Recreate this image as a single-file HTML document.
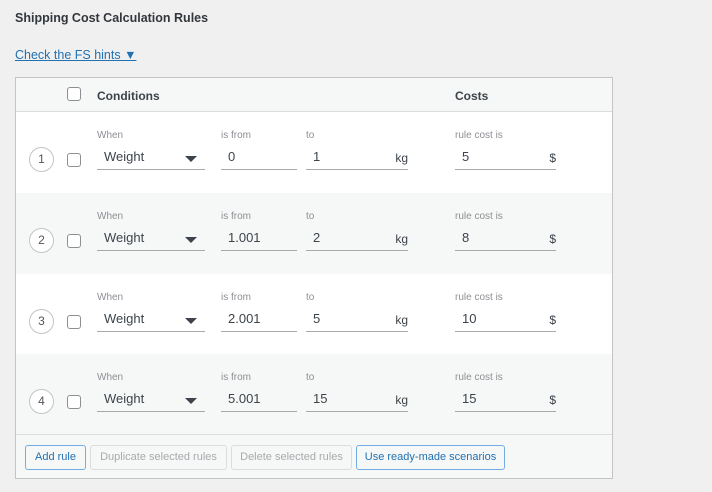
<!DOCTYPE html>
<html><head><style>
*{box-sizing:border-box;margin:0;padding:0}
body{width:712px;height:492px;background:#f0f0f1;font-family:"Liberation Sans",sans-serif;position:relative;overflow:hidden;color:#2c3338}
.a{position:absolute}
h2{position:absolute;left:15px;top:11px;font-size:12.5px;font-weight:bold;color:#32373c}
.link{left:15px;top:48px;font-size:12.5px;color:#2271b1;text-decoration:underline}
.tbl{left:15px;top:77px;width:598px;height:402px;border:1px solid #c3c4c7;background:#fff}
.hdr{left:0;top:0;width:596px;height:34px;background:#f6f7f7;border-bottom:1px solid #dcdcde}
.cb{width:14px;height:14px;border:1px solid #8c8f94;border-radius:3px;background:#fff}
.row{left:0;width:596px;height:81px}
.lbl{font-size:10px;color:#8c8f94}
.fld{border-bottom:1px solid #a7aaad;font-size:13px;color:#3c434a;height:22px;padding:1px 0 0 7px}
.car{position:absolute;right:8px;top:8px;width:0;height:0;border-left:6px solid transparent;border-right:6px solid transparent;border-top:6px solid #3c434a}
.circ{width:25px;height:25px;border:1px solid #c3c4c7;border-radius:50%;font-size:12px;color:#50575e;text-align:center;line-height:23px;background:#fff}
.ft{left:0;top:356px;width:596px;height:44px;background:#f6f7f7;border-top:1px solid #dcdcde}
.btn{top:10px;height:25px;border:1px solid #72aee6;border-radius:3px;background:#f6f7f7;font-size:11px;color:#2271b1;text-align:center;line-height:23px}
.dis{border-color:#dcdcde;color:#a7aaad}
</style></head><body>
<h2>Shipping Cost Calculation Rules</h2>
<div class="a link">Check the FS hints ▼</div>
<div class="a tbl">
<div class="a hdr">
<div class="a cb" style="left:51px;top:9px"></div>
<div class="a" style="left:81px;top:11px;font-size:12px;font-weight:bold;color:#3c434a">Conditions</div>
<div class="a" style="left:439px;top:11px;font-size:12px;font-weight:bold;color:#3c434a">Costs</div>
</div>
<div class="a row" style="top:34px;background:#fff">
<div class="a circ" style="left:13px;top:35px">1</div><div class="a cb" style="left:51px;top:41px"></div>
<div class="a lbl" style="left:81px;top:18px">When</div><div class="a lbl" style="left:205px;top:18px">is from</div><div class="a lbl" style="left:290px;top:18px">to</div><div class="a lbl" style="left:439px;top:18px">rule cost is</div>
<div class="a fld" style="left:81px;top:36px;width:108px">Weight<span class="car"></span></div>
<div class="a fld" style="left:205px;top:36px;width:76px">0</div>
<div class="a fld" style="left:290px;top:36px;width:102px">1<span style="position:absolute;right:0;top:3px;font-size:12px">kg</span></div>
<div class="a fld" style="left:439px;top:36px;width:101px">5<span style="position:absolute;right:0;top:3px;font-size:12px">$</span></div>
</div>
<div class="a row" style="top:115px;background:#f6f7f7">
<div class="a circ" style="left:13px;top:35px">2</div><div class="a cb" style="left:51px;top:41px"></div>
<div class="a lbl" style="left:81px;top:18px">When</div><div class="a lbl" style="left:205px;top:18px">is from</div><div class="a lbl" style="left:290px;top:18px">to</div><div class="a lbl" style="left:439px;top:18px">rule cost is</div>
<div class="a fld" style="left:81px;top:36px;width:108px">Weight<span class="car"></span></div>
<div class="a fld" style="left:205px;top:36px;width:76px">1.001</div>
<div class="a fld" style="left:290px;top:36px;width:102px">2<span style="position:absolute;right:0;top:3px;font-size:12px">kg</span></div>
<div class="a fld" style="left:439px;top:36px;width:101px">8<span style="position:absolute;right:0;top:3px;font-size:12px">$</span></div>
</div>
<div class="a row" style="top:196px;background:#fff">
<div class="a circ" style="left:13px;top:35px">3</div><div class="a cb" style="left:51px;top:41px"></div>
<div class="a lbl" style="left:81px;top:18px">When</div><div class="a lbl" style="left:205px;top:18px">is from</div><div class="a lbl" style="left:290px;top:18px">to</div><div class="a lbl" style="left:439px;top:18px">rule cost is</div>
<div class="a fld" style="left:81px;top:36px;width:108px">Weight<span class="car"></span></div>
<div class="a fld" style="left:205px;top:36px;width:76px">2.001</div>
<div class="a fld" style="left:290px;top:36px;width:102px">5<span style="position:absolute;right:0;top:3px;font-size:12px">kg</span></div>
<div class="a fld" style="left:439px;top:36px;width:101px">10<span style="position:absolute;right:0;top:3px;font-size:12px">$</span></div>
</div>
<div class="a row" style="top:276px;background:#f6f7f7">
<div class="a circ" style="left:13px;top:35px">4</div><div class="a cb" style="left:51px;top:41px"></div>
<div class="a lbl" style="left:81px;top:18px">When</div><div class="a lbl" style="left:205px;top:18px">is from</div><div class="a lbl" style="left:290px;top:18px">to</div><div class="a lbl" style="left:439px;top:18px">rule cost is</div>
<div class="a fld" style="left:81px;top:36px;width:108px">Weight<span class="car"></span></div>
<div class="a fld" style="left:205px;top:36px;width:76px">5.001</div>
<div class="a fld" style="left:290px;top:36px;width:102px">15<span style="position:absolute;right:0;top:3px;font-size:12px">kg</span></div>
<div class="a fld" style="left:439px;top:36px;width:101px">15<span style="position:absolute;right:0;top:3px;font-size:12px">$</span></div>
</div>
<div class="a ft">
<div class="a btn" style="left:9px;width:61px">Add rule</div>
<div class="a btn dis" style="left:74px;width:137px">Duplicate selected rules</div>
<div class="a btn dis" style="left:215px;width:121px">Delete selected rules</div>
<div class="a btn" style="left:340px;width:149px">Use ready-made scenarios</div>
</div>
</div>
</body></html>
